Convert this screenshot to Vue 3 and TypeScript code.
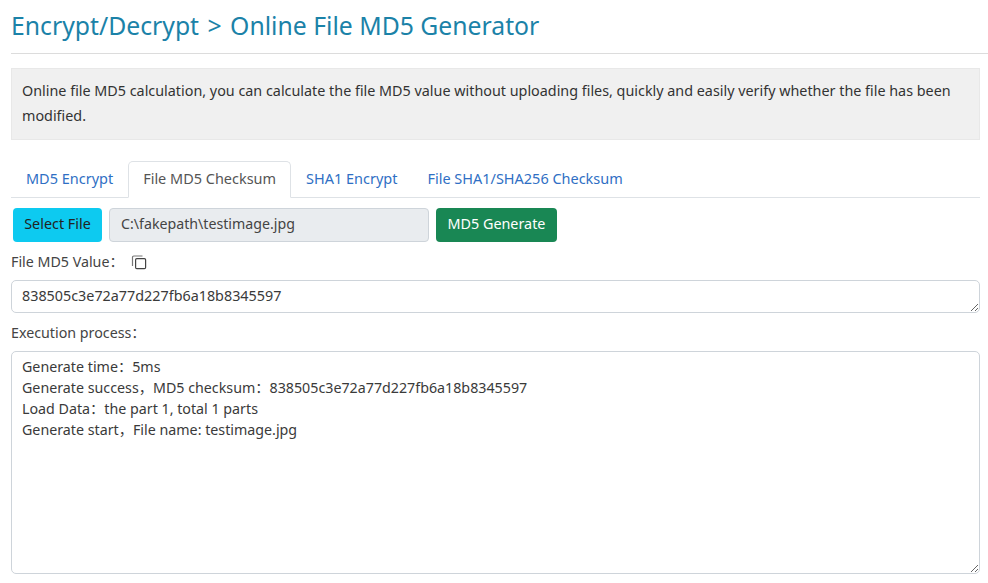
<script setup lang="ts">
import { ref } from 'vue'

const COLON = '\uFF1A'
const COMMA = '\uFF0C'
const tabs = ['MD5 Encrypt', 'File MD5 Checksum', 'SHA1 Encrypt', 'File SHA1/SHA256 Checksum']
const active = ref(1)
const md5 = '838505c3e72a77d227fb6a18b8345597'
const log = [
  `Generate time${COLON}5ms`,
  `Generate success${COMMA}MD5 checksum${COLON}${md5}`,
  `Load Data${COLON}the part 1, total 1 parts`,
  `Generate start${COMMA}File name: testimage.jpg`,
].join('\n')
</script>

<template>
  <main class="page">
    <h1 class="title">Encrypt/Decrypt <span class="sep">&gt;</span> Online File MD5 Generator</h1>
    <div class="content">
      <p class="intro">
        Online file MD5 calculation, you can calculate the file MD5 value without uploading files, quickly and easily verify whether the file has been modified.
      </p>
      <nav class="tabs">
        <a
          v-for="(tab, i) in tabs"
          :key="tab"
          class="tab"
          :class="{ active: i === active }"
          @click="active = i"
        >{{ tab }}</a>
      </nav>
      <div class="actions">
        <button class="btn btn-file">Select File</button>
        <input class="file-name" readonly value="C:\fakepath\testimage.jpg" />
        <button class="btn btn-go">MD5 Generate</button>
      </div>
      <div class="label label-md5">
        <span>File MD5 Value{{ COLON }}</span>
        <svg class="copy" viewBox="0 0 16 16" width="16" height="16" fill="none" stroke="#444" stroke-width="1.2">
          <rect x="4.6" y="4.6" width="10" height="10" rx="1.2" />
          <path d="M11.5 2H2.8A1.3 1.3 0 0 0 1.5 3.3V12" stroke="#777" />
        </svg>
      </div>
      <textarea class="box box-md5" readonly rows="1" :value="md5"></textarea>
      <div class="label label-log">Execution process{{ COLON }}</div>
      <textarea class="box box-log" readonly :value="log"></textarea>
    </div>
  </main>
</template>

<style>
html, body { margin: 0; background: #fff; }
</style>

<style scoped>
.page {
  width: 988px;
  height: 583px;
  overflow: hidden;
  box-sizing: border-box;
  padding-left: 11px;
  font-family: "Noto Sans", "Noto Sans CJK SC", sans-serif;
  font-size: 14.35px;
  color: #3a3a3a;
}
.title {
  margin: 0;
  height: 53px;
  box-sizing: content-box;
  border-bottom: 1px solid #dcdcdc;
  font-size: 24.75px;
  font-weight: 400;
  line-height: 51px;
  color: #1b82a8;
}
.sep {
  margin: 0 2px;
}
.content {
  width: 969px;
}
.intro {
  margin: 14px 0 0;
  box-sizing: border-box;
  height: 72px;
  padding: 9px 10px;
  background: #f0f0f0;
  border: 1px solid #e8e8e8;
  line-height: 25px;
  color: #333;
}
.tabs {
  display: flex;
  margin-top: 21px;
  height: 37px;
  box-sizing: border-box;
  border-bottom: 1px solid #dee2e6;
  font-size: 14.47px;
}
.tab {
  box-sizing: border-box;
  height: 37px;
  padding: 0 14px;
  line-height: 33px;
  border: 1px solid transparent;
  border-radius: 5px 5px 0 0;
  color: #2f6fc4;
  cursor: pointer;
}
.tab.active {
  color: #555;
  background: #fff;
  border-color: #dee2e6 #dee2e6 #fff;
}
.actions {
  display: flex;
  align-items: center;
  margin: 10px 0 0 2px;
  height: 34px;
}
.btn {
  height: 34px;
  box-sizing: border-box;
  border: 0;
  border-radius: 4px;
  padding: 0 0 3px;
  font: inherit;
  cursor: pointer;
}
.btn-file {
  width: 89px;
  background: #0dcaf0;
  color: #222;
}
.file-name {
  width: 320px;
  height: 34px;
  box-sizing: border-box;
  margin-left: 7px;
  padding: 0 11px 3px;
  border: 1px solid #ced4da;
  border-radius: 4px;
  background: #e9ecef;
  color: #444;
  font: inherit;
  font-size: 14.2px;
  outline: none;
}
.btn-go {
  width: 121px;
  margin-left: 7px;
  background: #198754;
  color: #fff;
}
.label {
  line-height: 20px;
  font-size: 14.25px;
  color: #444;
}
.label-md5 {
  display: flex;
  align-items: center;
  margin-top: 10px;
  height: 20px;
}
.copy {
  flex: none;
  margin-left: 7px;
}
.label-log {
  margin-top: 10px;
}
.box {
  display: block;
  width: 100%;
  box-sizing: border-box;
  margin: 0;
  border: 1px solid #ced4da;
  border-radius: 5px;
  padding: 4px 10px;
  font: inherit;
  line-height: 21px;
  color: #3a3a3a;
  outline: none;
  background: #fff;
}
.box-md5 {
  height: 33px;
  margin-top: 8px;
}
.box-log {
  height: 223px;
  margin-top: 8px;
  font-size: 14.26px;
}
</style>
